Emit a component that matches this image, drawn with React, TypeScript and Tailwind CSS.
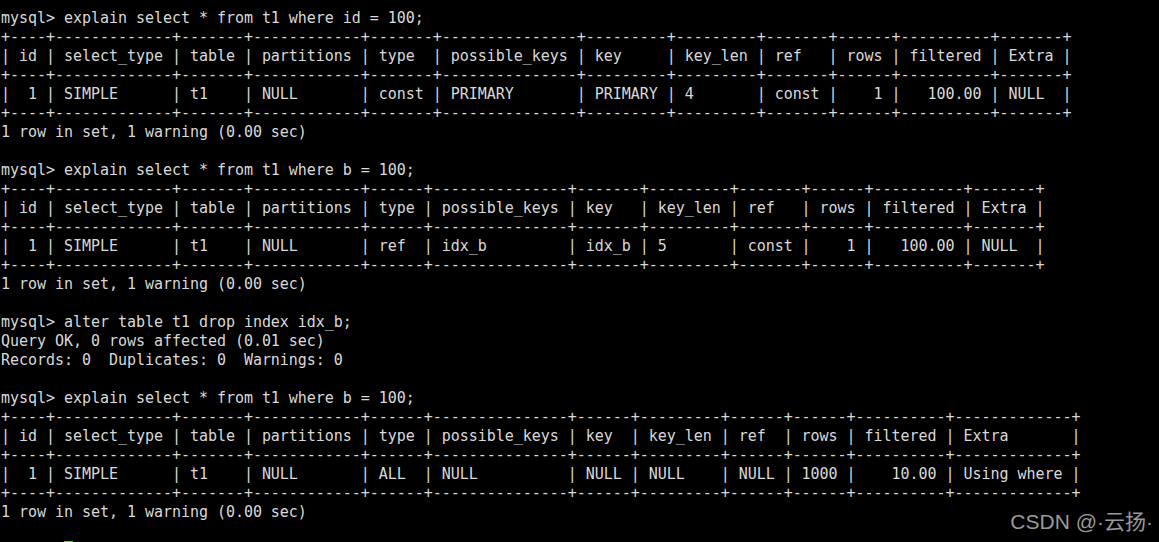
import React from 'react';

const lines = [
  'mysql> explain select * from t1 where id = 100;',
  '+----+-------------+-------+------------+-------+---------------+---------+---------+-------+------+----------+-------+',
  '| id | select_type | table | partitions | type  | possible_keys | key     | key_len | ref   | rows | filtered | Extra |',
  '+----+-------------+-------+------------+-------+---------------+---------+---------+-------+------+----------+-------+',
  '|  1 | SIMPLE      | t1    | NULL       | const | PRIMARY       | PRIMARY | 4       | const |    1 |   100.00 | NULL  |',
  '+----+-------------+-------+------------+-------+---------------+---------+---------+-------+------+----------+-------+',
  '1 row in set, 1 warning (0.00 sec)',
  '',
  'mysql> explain select * from t1 where b = 100;',
  '+----+-------------+-------+------------+------+---------------+-------+---------+-------+------+----------+-------+',
  '| id | select_type | table | partitions | type | possible_keys | key   | key_len | ref   | rows | filtered | Extra |',
  '+----+-------------+-------+------------+------+---------------+-------+---------+-------+------+----------+-------+',
  '|  1 | SIMPLE      | t1    | NULL       | ref  | idx_b         | idx_b | 5       | const |    1 |   100.00 | NULL  |',
  '+----+-------------+-------+------------+------+---------------+-------+---------+-------+------+----------+-------+',
  '1 row in set, 1 warning (0.00 sec)',
  '',
  'mysql> alter table t1 drop index idx_b;',
  'Query OK, 0 rows affected (0.01 sec)',
  'Records: 0  Duplicates: 0  Warnings: 0',
  '',
  'mysql> explain select * from t1 where b = 100;',
  '+----+-------------+-------+------------+------+---------------+------+---------+------+------+----------+-------------+',
  '| id | select_type | table | partitions | type | possible_keys | key  | key_len | ref  | rows | filtered | Extra       |',
  '+----+-------------+-------+------------+------+---------------+------+---------+------+------+----------+-------------+',
  '|  1 | SIMPLE      | t1    | NULL       | ALL  | NULL          | NULL | NULL    | NULL | 1000 |    10.00 | Using where |',
  '+----+-------------+-------+------------+------+---------------+------+---------+------+------+----------+-------------+',
  '1 row in set, 1 warning (0.00 sec)',
  '',
];

export default function App() {
  return (
    <div className="relative h-[542px] w-[1159px] overflow-hidden bg-black">
      <div className="pl-[1px] pt-[9px] font-['DejaVu_Sans_Mono',monospace] text-[15px] leading-[19px] tracking-[-0.035px] text-[#d9d9d9] whitespace-pre">
        {lines.map((l, i) => (
          <div key={i} className="h-[19px]">{l}</div>
        ))}
        <div className="flex h-[19px]">
          <span>mysql&gt; </span>
          <span className="inline-block h-[19px] w-[9px] bg-[#00ff00]" />
        </div>
      </div>
      {/* watermark */}
      <div className="absolute right-[6px] top-[506px] font-['Liberation_Sans','Noto_Sans_CJK_SC',sans-serif] text-[21px] text-[#9a9a9a]">
        CSDN @·云扬·
      </div>
    </div>
  );
}
